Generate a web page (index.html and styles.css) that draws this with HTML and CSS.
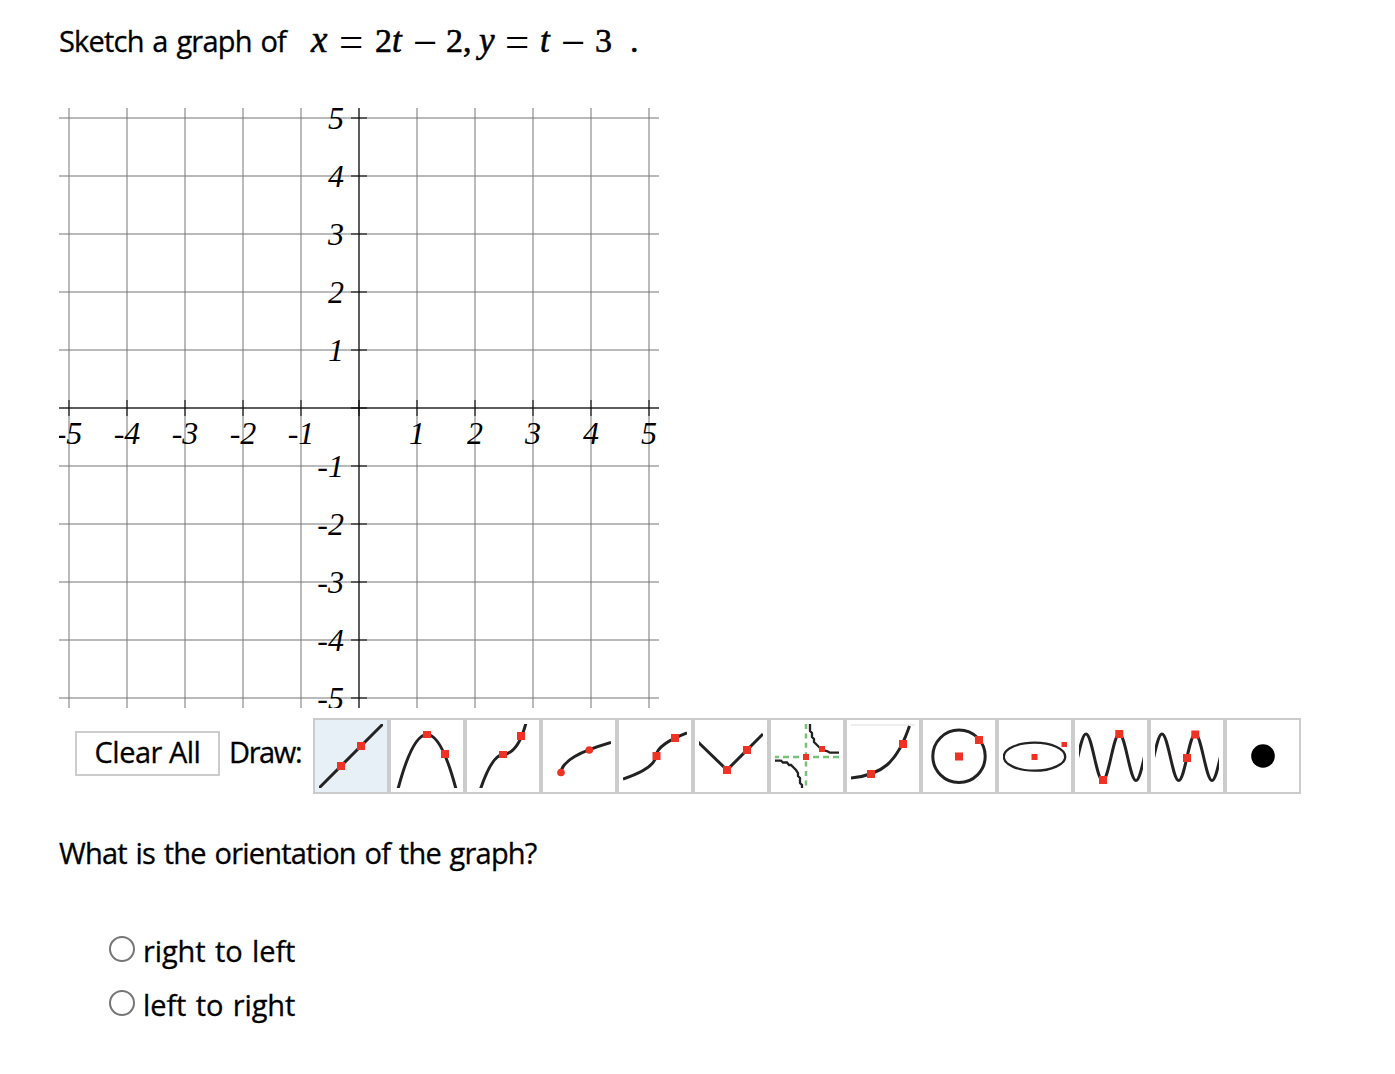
FILE: index.html
```html
<!DOCTYPE html>
<html lang="en">
<head>
  <meta charset="UTF-8"/>
  <meta name="viewport" content="width=device-width,initial-scale=1.0"/>
  <title>Sketch a graph</title>
  <link rel="stylesheet" href="styles.css">
</head>
<body>
  <div class="question">
    <p class="prompt"><span class="lead">Sketch a graph of</span>
      <svg class="math" width="340" height="60" viewBox="0 0 340 60">
        <text y="34"><tspan class="var x" x="2">x</tspan><tspan class="op" x="30" y="38">=</tspan><tspan x="66" y="34">2</tspan><tspan class="var" x="83">t</tspan><tspan class="op" x="104" y="39">−</tspan><tspan x="137" y="34">2</tspan><tspan x="154">,</tspan><tspan class="var" x="170">y</tspan><tspan class="op" x="196" y="38">=</tspan><tspan class="var" x="231" y="34">t</tspan><tspan class="op" x="252" y="39">−</tspan><tspan x="286" y="34">3</tspan><tspan x="321">.</tspan></text>
      </svg>
    </p>

    <svg class="graph" id="graph" width="600" height="600" viewBox="0 0 600 600"></svg>

    <div class="toolbar">
      <button class="clear" type="button"><span>Clear All</span></button>
      <span class="draw">Draw:</span>
      <div class="tools">
        <div class="tool active"><svg viewBox="0 0 64 64"><path d="M0 64L64 0"/><path class="dot" d="M18 38h8v8h-8zM38 18h8v8h-8z"/></svg></div>
        <div class="tool"><svg viewBox="0 0 64 64"><path d="M3 65Q32 -44 61 65"/><path class="dot" d="M28 7h8v7h-8zM46 26h8v8h-8z"/></svg></div>
        <div class="tool"><svg viewBox="0 0 64 64"><path d="M9.500 65C17 43 25 31 32 30.5C42 30 50 18 55 -1"/><path class="dot" d="M28 27h8v7h-8zM46 8h8v8h-8z"/></svg></div>
        <div class="tool"><svg viewBox="0 0 64 64"><path d="M13.5 49C16 36 32 28 64 18.5"/><circle class="dot" cx="14" cy="48.5" r="3.8"/><circle class="dot" cx="42.3" cy="26" r="3.8"/></svg></div>
        <div class="tool"><svg viewBox="0 0 64 64"><path d="M0 55C18 49 32 42 33 32C34 23 46 16 64 9"/><path class="dot" d="M29.5 28h8v8h-8zM48 10h8v8h-8z"/></svg></div>
        <div class="tool"><svg viewBox="0 0 64 64"><path d="M-1 18L28 46L64 10"/><path class="dot" d="M24 42h8v8h-8zM44 22h8v8h-8z"/></svg></div>
        <div class="tool"><svg viewBox="0 0 64 64"><path class="asym" d="M31 0V64" stroke-dasharray="5 4.4"/><path class="asym" d="M0 33H64" stroke-dasharray="6 4" stroke-dashoffset="2"/><path class="thin" d="M35 0V7L37 9V13L39 15V18L42 21L47 26L52 27L55 28.7H64M0 36.7H6L8 38.5H12L14 41H16L21 46L23 49V52L25 54V59L27 61V64"/><path class="dot" d="M28 30h6v6h-6zM44 22h6v6h-6z"/></svg></div>
        <div class="tool"><svg viewBox="0 0 64 64"><path class="faint" d="M0 1H64"/><path d="M0 54C31 51 46 39 58.5 2"/><path class="dot" d="M16 46h8v8h-8zM48 16h8v8h-8z"/></svg></div>
        <div class="tool"><svg viewBox="0 0 64 64"><circle cx="32" cy="32.3" r="26.2"/><path class="dot" d="M28 28.5h8v8h-8zM48 12h8v8h-8z"/></svg></div>
        <div class="tool"><svg viewBox="0 0 64 64"><ellipse class="thin" cx="31.5" cy="32.7" rx="30.7" ry="14"/><path class="dot" d="M28.5 30h6v6h-6zM58.5 18h5.5v5h-5.5z"/></svg></div>
        <div class="tool"><svg viewBox="0 0 64 64"><path d="M-9.6 56.5C-3.5 56.5 1 10 7 10S17.7 56.5 23.7 56.5S34.3 10 40.3 10S51 56.5 57 56.5S67.6 10 73.6 10"/><path class="dot" d="M20 52h8v8h-8zM36.3 6h8v8h-8z"/></svg></div>
        <div class="tool"><svg viewBox="0 0 64 64"><path d="M-9.6 56.5C-3.5 56.5 1 10 7 10S17.7 56.5 23.7 56.5S34.3 10 40.3 10S51 56.5 57 56.5S67.6 10 73.6 10"/><path class="dot" d="M28 30h8v8h-8zM36.3 6.5h8v8h-8z"/></svg></div>
        <div class="tool"><svg viewBox="0 0 64 64"><circle class="point" cx="32" cy="32" r="11.8"/></svg></div>
      </div>
    </div>

    <p class="ask"><span>What is the orientation of the graph?</span></p>

    <div class="choices">
      <label><input type="radio" name="dir"><span>right to left</span></label>
      <label><input type="radio" name="dir"><span>left to right</span></label>
    </div>
  </div>
  <script>
    // grid from -5 to 5, 58px per unit, origin at 300,300
    let grid = '', ticks = '', labels = '';
    for (let i = -5; i <= 5; i++) {
      const x = 300 + i * 58, y = 300 - i * 58;
      grid += `<path class="grid" d="M${x} 0V600"/><path class="grid" d="M0 ${y}H600"/>`;
      ticks += `<path class="axis" d="M${x} 292V308"/><path class="axis" d="M292 ${y}H308"/>`;
      if (i !== 0) {
        labels += `<text x="${x}" y="336" text-anchor="middle">${i}</text>`;
        labels += `<text x="285" y="${y + 11}" text-anchor="end">${i}</text>`;
      }
    }
    document.getElementById('graph').innerHTML = grid +
      '<path class="axis" d="M0 300H600"/><path class="axis" d="M300 0V600"/>' + ticks + labels;
  </script>
</body>
</html>
```
FILE: styles.css
```css
*{margin:0;padding:0;box-sizing:border-box;}
html{background:#fff;}
body{font-family:"Trebuchet MS","Open Sans",sans-serif;font-size:29px;font-weight:500;line-height:40px;letter-spacing:-.8px;word-spacing:2px;color:#000;-webkit-text-stroke:.3px #000;}
.question{padding:18px 0 0 59px;}
.prompt{display:flex;height:50px;margin-bottom:40px;}
.lead{width:250px;padding-top:3px;white-space:nowrap;}
.math{font-family:"Liberation Serif",serif;font-size:34px;letter-spacing:0;overflow:visible;-webkit-text-stroke:0;}
.math text{stroke:#000;stroke-width:.6px;}
.math .var{font-style:italic;font-size:35px;}
.math .x{font-size:37px;}
.math .op{font-size:43px;stroke:none;}
.graph{display:block;overflow:hidden;}
.grid{stroke:#757575;stroke-width:2;stroke-opacity:.5;}
.axis{stroke:#000;stroke-width:2;stroke-opacity:.5;}
.graph text{font:italic 32px "Liberation Serif",serif;letter-spacing:0;-webkit-text-stroke:0;}
.toolbar{display:flex;align-items:center;height:76px;margin-top:10px;padding-left:16px;}
.clear{width:145px;height:45px;margin-bottom:6px;border:2px solid #ccc;background:#fff;font:inherit;letter-spacing:-.5px;color:#000;white-space:nowrap;}
.clear span{position:relative;top:-1px;}
.draw{width:84px;margin:0 0 8px 9px;letter-spacing:-1.4px;white-space:nowrap;}
.tools{display:flex;}
.tool{width:76px;height:76px;border:2px solid #ccc;padding:4px;}
.tool.active{background:#e7eff7;}
.tool svg{display:block;width:64px;height:64px;fill:none;stroke:#222;stroke-width:3;}
.tool .dot{fill:#ee3324;stroke:none;}
.tool .thin{stroke-width:2.3;}
.tool .asym{stroke:#77c277;stroke-width:2.5;}
.tool .faint{stroke:#eee;stroke-width:2;}
.tool .point{fill:#000;stroke:none;}
.ask{margin-top:39px;}
.choices{margin-top:58px;padding-left:50px;letter-spacing:-.1px;}
.choices label{display:flex;height:54px;}
.choices input{appearance:none;width:26px;height:26px;margin:5px 8px 0 0;border:2px solid #767676;border-radius:50%;background:#fff;}
```
